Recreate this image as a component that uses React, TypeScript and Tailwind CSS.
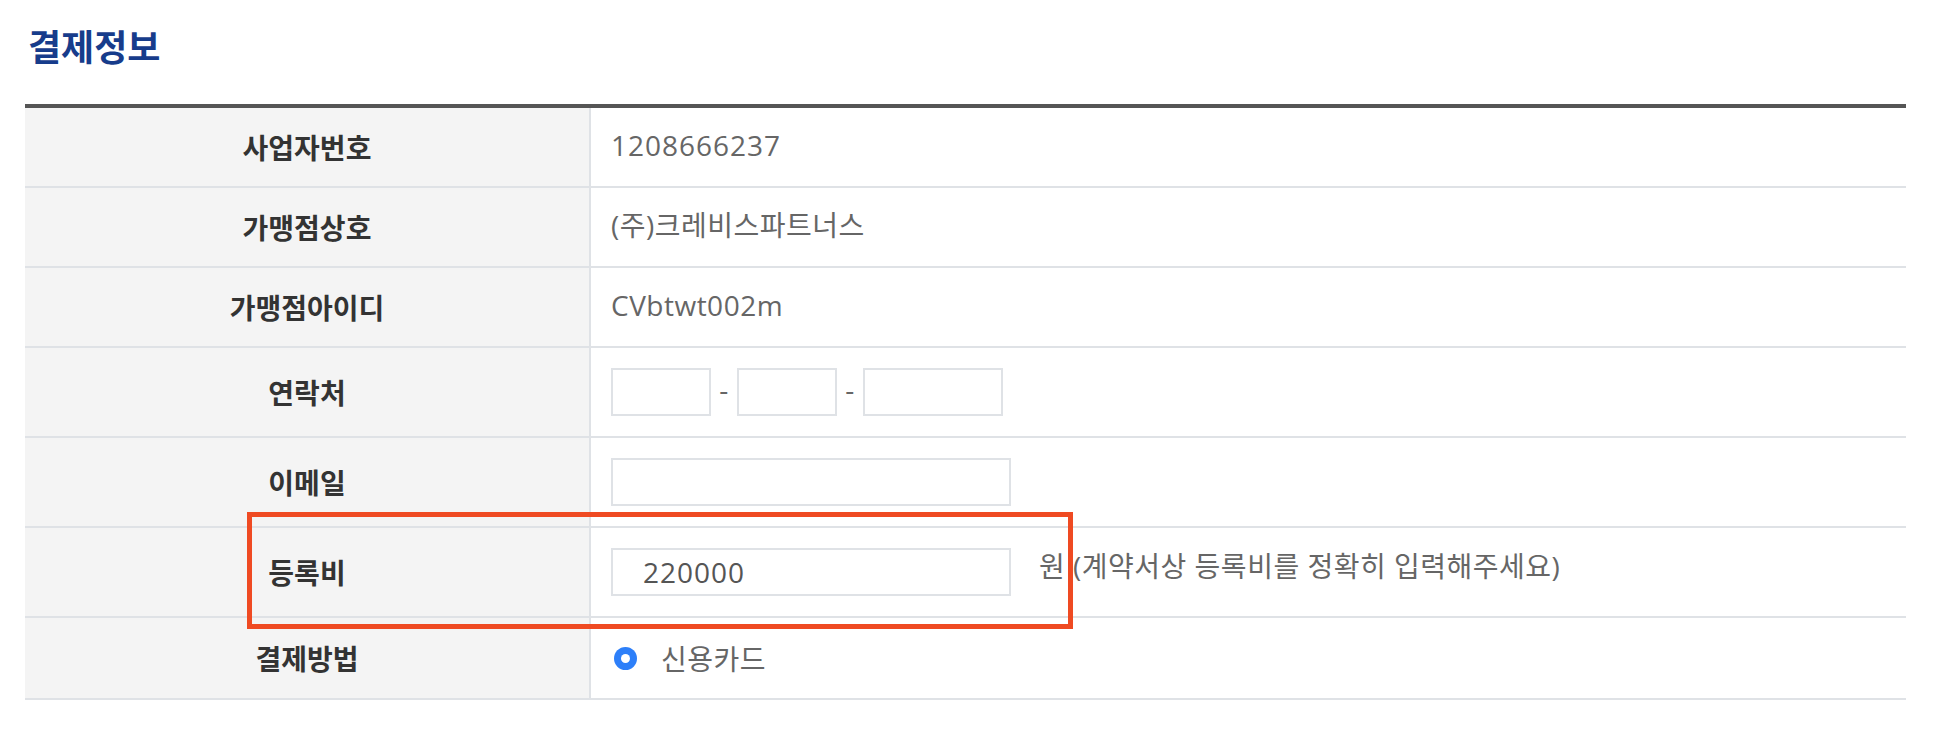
import React from "react";

const rows = [
  { label: "사업자번호", value: "1208666237", digits: true },
  { label: "가맹점상호", value: "(주)크레비스파트너스" },
  { label: "가맹점아이디", value: "CVbtwt002m" },
];

function Row({ label, tall, last, children }: { label: string; tall?: boolean; last?: boolean; children: React.ReactNode }) {
  return (
    <div
      className={
        "flex border-b-2 border-[#dfe2e6] " +
        (tall ? "h-[90px]" : last ? "h-[82px]" : "h-[80px]")
      }
    >
      <div className="w-[566px] shrink-0 flex items-center justify-center bg-[#f4f4f4] border-r-2 border-[#dfe2e6] text-[28px] font-bold text-[#333]">
        {label}
      </div>
      <div className="flex-1 flex items-center pl-[20px] text-[28px] leading-[40px] tracking-[0.5px] text-[#666] font-['Open_Sans','Noto_Sans_CJK_KR',sans-serif]">
        {children}
      </div>
    </div>
  );
}

const inputCls =
  "h-[48px] border-2 border-[#dfe2e6] bg-white outline-none text-[28px] text-[#555] font-['Open_Sans','Noto_Sans_CJK_KR',sans-serif]";

export default function App() {
  return (
    <div className="relative w-[1940px] h-[750px] bg-white font-['Noto_Sans_CJK_KR',sans-serif]">
      <h2 className="pt-[27px] pl-[28px] text-[36px] leading-[36px] font-bold text-[#173c8b]">결제정보</h2>

      <div className="mt-[41px] ml-[25px] w-[1881px] border-t-4 border-[#555]">
        {rows.map((r) => (
          <Row key={r.label} label={r.label}>
            <span className={r.digits ? "mb-[5px] tracking-[1px]" : "mb-[5px]"}>{r.value}</span>
          </Row>
        ))}
        <Row label="연락처" tall>
          <input className={inputCls + " w-[100px]"} />
          <span className="mx-[8px] w-[10px] mb-[6px] text-center">-</span>
          <input className={inputCls + " w-[100px]"} />
          <span className="mx-[8px] w-[10px] mb-[6px] text-center">-</span>
          <input className={inputCls + " w-[140px]"} />
        </Row>
        <Row label="이메일" tall>
          <input className={inputCls + " w-[400px]"} />
        </Row>
        <Row label="등록비" tall>
          <input className={inputCls + " w-[400px] pl-[30px] tracking-[1px]"} defaultValue="220000" readOnly />
          <span className="ml-[28px] mb-[12px]">원 (계약서상 등록비를 정확히 입력해주세요)</span>
        </Row>
        <Row label="결제방법" last>
          <span className="ml-[3px] w-[23px] h-[23px] rounded-full bg-[#2d7ff9] flex items-center justify-center">
            <span className="w-[9px] h-[9px] rounded-full bg-white" />
          </span>
          <span className="ml-[24px] mt-[2px]">신용카드</span>
        </Row>
      </div>

      <div className="absolute left-[247px] top-[512px] w-[826px] h-[117px] border-[5px] border-[#ef4a22]" />
    </div>
  );
}
